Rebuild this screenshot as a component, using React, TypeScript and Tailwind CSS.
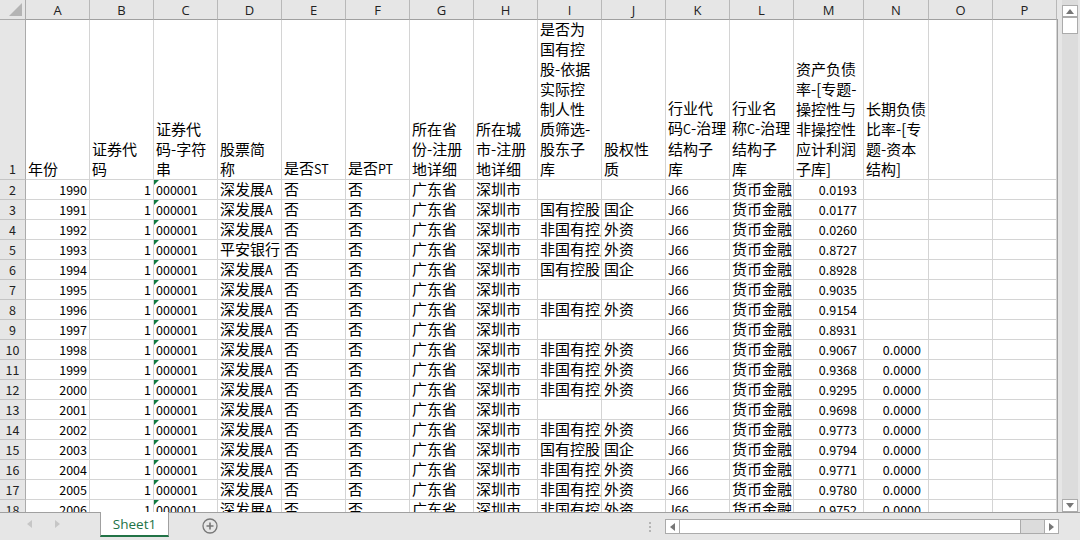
import { Fragment } from 'react';

const columns = [
  { name: 'A', width: 'w-[64px]' },
  { name: 'B', width: 'w-[64px]' },
  { name: 'C', width: 'w-[64px]' },
  { name: 'D', width: 'w-[64px]' },
  { name: 'E', width: 'w-[64px]' },
  { name: 'F', width: 'w-[64px]' },
  { name: 'G', width: 'w-[64px]' },
  { name: 'H', width: 'w-[64px]' },
  { name: 'I', width: 'w-[64px]' },
  { name: 'J', width: 'w-[64px]' },
  { name: 'K', width: 'w-[64px]' },
  { name: 'L', width: 'w-[64px]' },
  { name: 'M', width: 'w-[70px]' },
  { name: 'N', width: 'w-[65px]' },
  { name: 'O', width: 'w-[64px]' },
  { name: 'P', width: 'w-[64px]' },
];

const titles: string[][] = [
  ['年份'],
  ['证券代', '码'],
  ['证券代', '码-字符', '串'],
  ['股票简', '称'],
  ['是否ST'],
  ['是否PT'],
  ['所在省', '份-注册', '地详细'],
  ['所在城', '市-注册', '地详细'],
  ['是否为', '国有控', '股-依据', '实际控', '制人性', '质筛选-', '股东子', '库'],
  ['股权性', '质'],
  ['行业代', '码C-治理', '结构子', '库'],
  ['行业名', '称C-治理', '结构子', '库'],
  ['资产负债', '率-[专题-', '操控性与', '非操控性', '应计利润', '子库]'],
  ['长期负债', '比率-[专', '题-资本', '结构]'],
  [],
  [],
];

const owner = ['', '国有控股', '非国有控股', '非国有控股', '国有控股', '', '非国有控股', '', '非国有控股', '非国有控股', '非国有控股', '', '非国有控股', '国有控股', '非国有控股', '非国有控股', '非国有控股'];
const equity = ['', '国企', '外资', '外资', '国企', '', '外资', '', '外资', '外资', '外资', '', '外资', '国企', '外资', '外资', '外资'];
const debt = ['0.0193', '0.0177', '0.0260', '0.8727', '0.8928', '0.9035', '0.9154', '0.8931', '0.9067', '0.9368', '0.9295', '0.9698', '0.9773', '0.9794', '0.9771', '0.9780', '0.9752'];

// Latin runs are smaller than CJK in the sheet, so split them out
function Mixed({ text }: { text: string }) {
  const parts = text.match(/[A-Za-z0-9.]+|[^A-Za-z0-9.]+/g) ?? [];
  return (
    <>
      {parts.map((part, i) =>
        /[A-Za-z0-9.]/.test(part[0]) ? (
          <span key={i} className="text-[12.5px]">{part}</span>
        ) : (
          <span key={i}>{part}</span>
        ),
      )}
    </>
  );
}

function Cell({ width, text, right, flag, pad }: { width: string; text?: string; right?: boolean; flag?: boolean; pad?: string }) {
  return (
    <div
      className={`${width} relative h-full shrink-0 overflow-x-clip whitespace-nowrap border-r border-b border-[#d4d4d4] pl-[2px] leading-[18px] ${pad ?? 'pr-[2px]'} ${right ? 'text-right' : ''}`}
    >
      {flag && <div className="absolute left-0 top-0 h-0 w-0 border-t-[5px] border-r-[5px] border-t-[#107c41] border-r-transparent" />}
      {text && <Mixed text={text} />}
    </div>
  );
}

function RowHead({ n, className }: { n: number; className: string }) {
  return (
    <div className={`${className} w-[26px] shrink-0 border-r border-b border-r-[#ababab] border-b-[#c4c4c4] bg-[#e6e6e6] text-center text-[12.5px] leading-[20px] text-[#222]`}>
      {n}
    </div>
  );
}

function Arrow({ dir, fill }: { dir: 'up' | 'down' | 'left' | 'right'; fill: string }) {
  const points = { up: '0,5 8,5 4,0', down: '0,0 8,0 4,5', left: '5,0 5,8 0,4', right: '0,0 0,8 5,4' }[dir];
  const vertical = dir === 'up' || dir === 'down';
  return (
    <svg width={vertical ? 8 : 5} height={vertical ? 5 : 8}>
      <polygon points={points} fill={fill} />
    </svg>
  );
}

export default function App() {
  return (
    <div className="flex h-[540px] w-[1080px] flex-col overflow-hidden bg-[#e6e6e6] text-[15px] text-black [font-family:'Noto_Sans_CJK_SC','Open_Sans',sans-serif]">
      <div className="flex h-[513px] shrink-0 border-b border-[#a0a0a0]">
        {/* grid */}
        <div className="flex w-[1058px] shrink-0 flex-col overflow-hidden">
          <div className="flex h-[20px] shrink-0">
            <div className="flex h-full w-[26px] shrink-0 items-end justify-end border-r border-b border-[#ababab] p-[3px]">
              <svg width="13" height="13">
                <polygon points="13,0 13,13 0,13" fill="#b4b4b4" />
              </svg>
            </div>
            {columns.map((c) => (
              <div
                key={c.name}
                className={`${c.width} h-full shrink-0 border-r border-b border-r-[#b8b8b8] border-b-[#a0a0a0] text-center text-[13px] leading-[20px] text-[#222] [font-family:'Open_Sans',sans-serif]`}
              >
                {c.name}
              </div>
            ))}
            <div className="h-full w-[2px] shrink-0 border-b border-[#a0a0a0]" />
          </div>

          <div className="flex h-[160px] shrink-0 bg-white">
            <div className="flex h-full w-[26px] shrink-0 flex-col justify-end border-r border-b border-r-[#ababab] border-b-[#c4c4c4] bg-[#e6e6e6] text-center text-[12.5px] leading-[20px] text-[#222]">
              1
            </div>
            {columns.map((c, i) => (
              <div
                key={c.name}
                className={`${c.width} flex h-full shrink-0 flex-col justify-end overflow-hidden whitespace-nowrap border-r border-b border-[#d4d4d4] pl-[2px] leading-[20px]`}
              >
                {titles[i].map((line) => (
                  <Fragment key={line}>
                    <div><Mixed text={line} /></div>
                  </Fragment>
                ))}
              </div>
            ))}
            <div className="h-full w-[2px] shrink-0 border-l border-[#a0a0a0] bg-[#e6e6e6]" />
          </div>

          {debt.map((value, i) => {
            const year = 1990 + i;
            return (
              <div key={year} className="flex h-[20px] shrink-0 bg-white">
                <RowHead n={i + 2} className="h-full" />
                <Cell width="w-[64px]" text={String(year)} right />
                <Cell width="w-[64px]" text="1" right />
                <Cell width="w-[64px]" text="000001" flag />
                <Cell width="w-[64px]" text={i === 3 ? '平安银行' : '深发展A'} />
                <Cell width="w-[64px]" text="否" />
                <Cell width="w-[64px]" text="否" />
                <Cell width="w-[64px]" text="广东省" />
                <Cell width="w-[64px]" text="深圳市" />
                <Cell width="w-[64px]" text={owner[i]} />
                <Cell width="w-[64px]" text={equity[i]} />
                <Cell width="w-[64px]" text="J66" />
                <Cell width="w-[64px]" text="货币金融" />
                <Cell width="w-[70px]" text={value} right pad="pr-[6px]" />
                <Cell width="w-[65px]" text={i >= 8 ? '0.0000' : ''} right pad="pr-[7px]" />
                <Cell width="w-[64px]" />
                <Cell width="w-[64px]" />
                <div className="h-full w-[2px] shrink-0 border-l border-[#a0a0a0] bg-[#e6e6e6]" />
              </div>
            );
          })}
        </div>

        {/* vertical scrollbar */}
        <div className="ml-[4px] flex w-[16px] shrink-0 flex-col bg-[#dcdcdc]">
          <div className="mt-[5px] flex h-[12px] shrink-0 items-center justify-center border border-[#ababab] bg-white">
            <Arrow dir="up" fill="#777" />
          </div>
          <div className="h-[17px] shrink-0 border border-[#ababab] bg-white" />
          <div className="flex-1" />
          <div className="flex h-[13px] shrink-0 items-center justify-center border border-[#ababab] bg-white">
            <Arrow dir="down" fill="#777" />
          </div>
        </div>
      </div>

      {/* sheet tabs */}
      <div className="flex flex-1 items-start">
        <div className="flex h-[22px] w-[100px] shrink-0 items-center pl-[27px]">
          <Arrow dir="left" fill="#c6c6c6" />
          <div className="ml-[23px]">
            <Arrow dir="right" fill="#c6c6c6" />
          </div>
        </div>
        <div className="-mt-px flex h-[25px] w-[69px] shrink-0 items-center justify-center border-x border-b-2 border-x-[#a0a0a0] border-b-[#217346] bg-white pt-px text-[13.5px] text-[#217346] [font-family:'Open_Sans',sans-serif]">
          Sheet1
        </div>
        <svg className="ml-[33px] mt-[5px] shrink-0" width="16" height="16">
          <circle cx="8" cy="8" r="7" fill="none" stroke="#777" strokeWidth="1.3" />
          <path d="M8 4.5v7M4.5 8h7" stroke="#777" strokeWidth="1.6" />
        </svg>
        <div className="ml-[431px] mt-[9px] flex h-[10px] w-[3px] shrink-0 flex-col justify-between">
          <div className="h-[2px] w-[2px] bg-[#b5b5b5]" />
          <div className="h-[2px] w-[2px] bg-[#b5b5b5]" />
          <div className="h-[2px] w-[2px] bg-[#b5b5b5]" />
        </div>
        <div className="ml-[13px] mt-[6px] flex h-[15px] w-[394px] shrink-0 border border-[#ababab] bg-[#dcdcdc]">
          <div className="flex w-[14px] shrink-0 items-center justify-center border-r border-[#ababab] bg-white">
            <Arrow dir="left" fill="#777" />
          </div>
          <div className="w-[341px] shrink-0 border-r border-[#ababab] bg-white" />
          <div className="flex-1" />
          <div className="flex w-[14px] shrink-0 items-center justify-center border-l border-[#ababab] bg-white">
            <Arrow dir="right" fill="#777" />
          </div>
        </div>
      </div>
    </div>
  );
}
